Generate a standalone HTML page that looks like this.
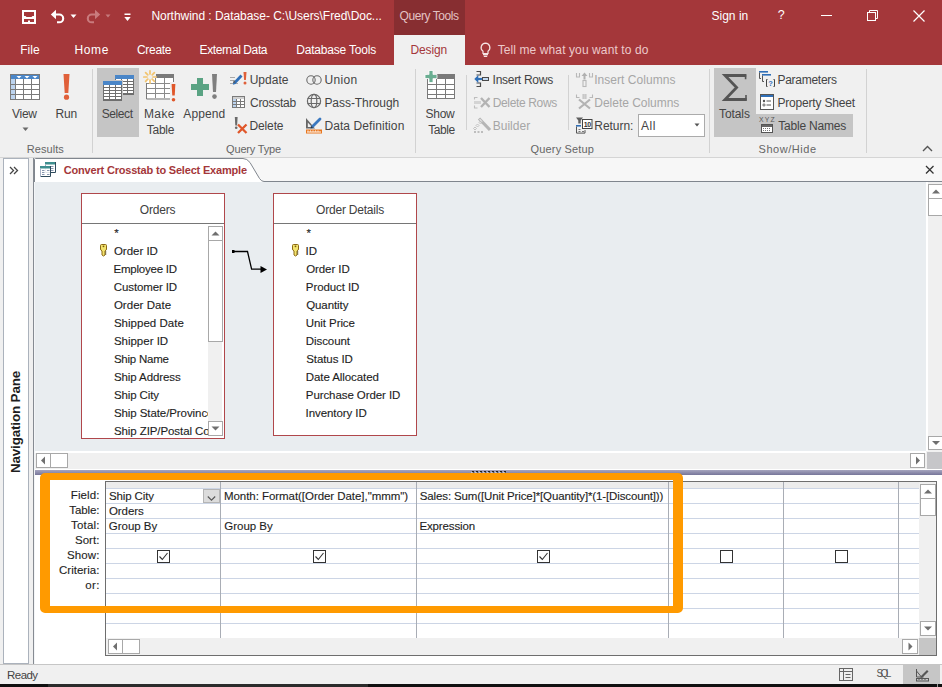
<!DOCTYPE html>
<html><head><meta charset="utf-8">
<style>
*{margin:0;padding:0;box-sizing:border-box}
html,body{width:942px;height:687px;overflow:hidden;background:#f0f0f0;font-family:"Liberation Sans",sans-serif;font-size:12px;color:#262626}
.a{position:absolute;white-space:nowrap}
svg.a{overflow:visible}
.k{-webkit-text-stroke:0.12px currentColor}
</style></head><body>
<div class="a" style="left:0px;top:0px;width:942px;height:65px;background:#a4373a;"></div>
<div class="a" style="left:394px;top:0px;width:71px;height:35px;background:#872e31;"></div>
<div class="a" style="left:394px;top:35px;width:71px;height:30px;background:#f0f0f0;"></div>
<svg class="a" style="left:22px;top:10px;" width="14" height="14" viewBox="0 0 14 14"><rect x="1" y="1" width="12" height="12" fill="none" stroke="#fff" stroke-width="2"/><path d="M2 6h1.5l1 1h5l1-1H12V9H2z" fill="#fff"/><rect x="6" y="10.5" width="2" height="2" fill="#fff"/></svg>
<svg class="a" style="left:50px;top:9px;" width="16" height="15" viewBox="0 0 16 15"><path d="M0.8 5.5L6 0.8V10.2z" fill="#fff"/><path d="M5 5.5H9.3A3.9 3.9 0 0 1 9.3 13.3H7" fill="none" stroke="#fff" stroke-width="2.1"/></svg>
<svg class="a" style="left:70px;top:14px;" width="8" height="5" viewBox="0 0 8 5"><path d="M0.5 0.5h6l-3 3.5z" fill="#fff"/></svg>
<svg class="a" style="left:85px;top:9px;" width="16" height="15" viewBox="0 0 16 15"><path d="M15.2 5.5L10 0.8V10.2z" fill="#c97b7d"/><path d="M11 5.5H6.7A3.9 3.9 0 0 0 6.7 13.3H9" fill="none" stroke="#c97b7d" stroke-width="2.1"/></svg>
<svg class="a" style="left:105px;top:14px;" width="7" height="5" viewBox="0 0 7 5"><path d="M0.5 0.5h5l-2.5 3z" fill="#c57a7c"/></svg>
<svg class="a" style="left:124px;top:13px;" width="8" height="9" viewBox="0 0 8 9"><rect x="0.5" y="0.5" width="6" height="1.5" fill="#fff"/><path d="M0.3 4h6.4l-3.2 4z" fill="#fff"/></svg>
<div class="a" style="left:151.40px;top:10px;font-size:12px;line-height:12px;color:#fff;letter-spacing:-0.041px;">Northwind : Database- C:\Users\Fred\Doc...</div>
<div class="a" style="left:399.60px;top:10px;font-size:12px;line-height:12px;color:#e3c2c3;letter-spacing:-0.440px;">Query Tools</div>
<div class="a" style="left:711.40px;top:10px;font-size:12px;line-height:12px;color:#fff;letter-spacing:0.033px;">Sign in</div>
<div class="a" style="left:777.80px;top:9px;font-size:12.5px;line-height:13px;color:#fff;">?</div>
<div class="a" style="left:821px;top:15px;width:11px;height:1px;background:#fff;"></div>
<svg class="a" style="left:866px;top:9px;" width="13" height="13" viewBox="0 0 13 13"><rect x="1.5" y="3.5" width="8" height="8" fill="none" stroke="#fff" stroke-width="1"/><path d="M3.5 3.5v-2h8v8h-2" fill="none" stroke="#fff" stroke-width="1"/></svg>
<svg class="a" style="left:912px;top:9px;" width="14" height="14" viewBox="0 0 14 14"><path d="M1.5 1.5L12.5 12.5M12.5 1.5L1.5 12.5" stroke="#fff" stroke-width="1.2"/></svg>
<div class="a" style="left:20.20px;top:44px;font-size:12px;line-height:12px;color:#fff;letter-spacing:0.067px;">File</div>
<div class="a" style="left:74.40px;top:44px;font-size:12px;line-height:12px;color:#fff;letter-spacing:0.667px;">Home</div>
<div class="a" style="left:137.00px;top:44px;font-size:12px;line-height:12px;color:#fff;letter-spacing:-0.320px;">Create</div>
<div class="a" style="left:199.60px;top:44px;font-size:12px;line-height:12px;color:#fff;letter-spacing:-0.400px;">External Data</div>
<div class="a" style="left:296.20px;top:44px;font-size:12px;line-height:12px;color:#fff;letter-spacing:-0.192px;">Database Tools</div>
<div class="a" style="left:410.60px;top:44px;font-size:12px;line-height:12px;color:#a4373a;letter-spacing:-0.160px;">Design</div>
<svg class="a" style="left:479px;top:42px;" width="13" height="16" viewBox="0 0 13 16"><path d="M6.5 1.2a4.4 4.4 0 0 0-2.5 8v2.3h5v-2.3a4.4 4.4 0 0 0-2.5-8z" fill="none" stroke="#f6e4e4" stroke-width="1.2"/><path d="M4 12.6h5M4.8 14.4h3.4" stroke="#f6e4e4" stroke-width="1.2"/></svg>
<div class="a" style="left:497.70px;top:44px;font-size:12px;line-height:12px;color:#ecc9ca;letter-spacing:0.100px;">Tell me what you want to do</div>
<div class="a" style="left:97px;top:68px;width:42px;height:69px;background:#c5c5c5;"></div>
<div class="a" style="left:714px;top:68px;width:42px;height:69px;background:#c5c5c5;"></div>
<div class="a" style="left:756px;top:114px;width:97px;height:23px;background:#c5c5c5;"></div>
<div class="a" style="left:92px;top:69px;width:1px;height:84px;background:#d2d2d2;"></div>
<div class="a" style="left:415px;top:69px;width:1px;height:84px;background:#d2d2d2;"></div>
<div class="a" style="left:709px;top:69px;width:1px;height:84px;background:#d2d2d2;"></div>
<div class="a" style="left:866px;top:69px;width:1px;height:84px;background:#d2d2d2;"></div>
<div class="a" style="left:466px;top:75px;width:1px;height:55px;background:#d2d2d2;"></div>
<div class="a" style="left:568px;top:75px;width:1px;height:55px;background:#d2d2d2;"></div>
<svg class="a" style="left:10px;top:74px;" width="31" height="26" viewBox="0 0 31 26"><rect x="0.5" y="0.5" width="29" height="25" fill="#fff" stroke="#7a7a7a" stroke-width="1"/><rect x="1" y="1" width="28" height="4" fill="#4a86c8"/><rect x="1" y="5" width="4" height="20" fill="#bcd3ee"/><rect x="5" y="5" width="1" height="20" fill="#7a7a7a"/><rect x="13" y="5" width="1" height="20" fill="#7a7a7a"/><rect x="21" y="5" width="1" height="20" fill="#7a7a7a"/><rect x="1" y="10" width="28" height="1" fill="#7a7a7a"/><rect x="1" y="15" width="28" height="1" fill="#7a7a7a"/><rect x="1" y="20" width="28" height="1" fill="#7a7a7a"/><path d="M6.5 2h5l-2.5 2.5z" fill="#fff"/><path d="M14.5 2h5l-2.5 2.5z" fill="#fff"/><path d="M22.5 2h5l-2.5 2.5z" fill="#fff"/></svg>
<svg class="a" style="left:22px;top:127px;" width="7" height="5" viewBox="0 0 7 5"><path d="M0.5 0.5h6l-3 3.5z" fill="#6a6a6a"/></svg>
<div class="a" style="left:12.10px;top:108px;font-size:12px;line-height:12px;color:#444444;letter-spacing:-0.300px;">View</div>
<svg class="a" style="left:62px;top:73px;" width="9" height="28" viewBox="0 0 9 28"><path d="M1.5 1h6l-1.2 19h-3.6z" fill="#e0603a"/><circle cx="4.5" cy="24.2" r="2.6" fill="#e0603a"/></svg>
<div class="a" style="left:55.60px;top:108px;font-size:12px;line-height:12px;color:#444444;letter-spacing:-0.200px;">Run</div>
<svg class="a" style="left:103px;top:75px;" width="31" height="26" viewBox="0 0 31 26"><rect x="12" y="0" width="19" height="20" fill="#6e6e6e"/><rect x="12" y="0" width="19" height="4" fill="#4a86c8"/><rect x="13.00" y="4.00" width="5.00" height="2.00" fill="#fff"/><rect x="19.00" y="4.00" width="5.00" height="2.00" fill="#fff"/><rect x="25.00" y="4.00" width="5.00" height="2.00" fill="#fff"/><rect x="13.00" y="7.00" width="5.00" height="2.00" fill="#fff"/><rect x="19.00" y="7.00" width="5.00" height="2.00" fill="#fff"/><rect x="25.00" y="7.00" width="5.00" height="2.00" fill="#fff"/><rect x="13.00" y="10.00" width="5.00" height="2.00" fill="#fff"/><rect x="19.00" y="10.00" width="5.00" height="2.00" fill="#fff"/><rect x="25.00" y="10.00" width="5.00" height="2.00" fill="#fff"/><rect x="13.00" y="13.00" width="5.00" height="2.00" fill="#fff"/><rect x="19.00" y="13.00" width="5.00" height="2.00" fill="#fff"/><rect x="25.00" y="13.00" width="5.00" height="2.00" fill="#fff"/><rect x="13.00" y="16.00" width="5.00" height="2.00" fill="#fff"/><rect x="19.00" y="16.00" width="5.00" height="2.00" fill="#fff"/><rect x="25.00" y="16.00" width="5.00" height="2.00" fill="#fff"/><rect x="11" y="5" width="9" height="21" fill="#c5c5c5"/><rect x="0" y="6" width="19" height="20" fill="#6e6e6e"/><rect x="0" y="6" width="19" height="4" fill="#4a86c8"/><rect x="1.00" y="10.00" width="5.00" height="2.00" fill="#fff"/><rect x="7.00" y="10.00" width="5.00" height="2.00" fill="#fff"/><rect x="13.00" y="10.00" width="5.00" height="2.00" fill="#fff"/><rect x="1.00" y="13.00" width="5.00" height="2.00" fill="#fff"/><rect x="7.00" y="13.00" width="5.00" height="2.00" fill="#fff"/><rect x="13.00" y="13.00" width="5.00" height="2.00" fill="#fff"/><rect x="1.00" y="16.00" width="5.00" height="2.00" fill="#fff"/><rect x="7.00" y="16.00" width="5.00" height="2.00" fill="#fff"/><rect x="13.00" y="16.00" width="5.00" height="2.00" fill="#fff"/><rect x="1.00" y="19.00" width="5.00" height="2.00" fill="#fff"/><rect x="7.00" y="19.00" width="5.00" height="2.00" fill="#fff"/><rect x="13.00" y="19.00" width="5.00" height="2.00" fill="#fff"/><rect x="1.00" y="22.00" width="5.00" height="2.00" fill="#fff"/><rect x="7.00" y="22.00" width="5.00" height="2.00" fill="#fff"/><rect x="13.00" y="22.00" width="5.00" height="2.00" fill="#fff"/></svg>
<div class="a" style="left:101.70px;top:108px;font-size:12px;line-height:12px;color:#444444;letter-spacing:-0.400px;">Select</div>
<svg class="a" style="left:144px;top:70px;" width="33" height="33" viewBox="0 0 33 33"><rect x="3" y="8" width="26" height="20" fill="#fff"/><rect x="12" y="4" width="18" height="4" fill="#7a7a7a"/><path d="M2.5 13v16h25M29.5 4v9" fill="none" stroke="#7a7a7a"/><path d="M3 13.5h24M3 18.5h24M3 23.5h24M11.5 8v20M20.5 8v20" stroke="#8a8a8a"/><rect x="26" y="12" width="7" height="21" fill="#f0f0f0"/><path d="M27.6 14h3.8l-0.7 11.5h-2.4z" fill="#e0572a"/><circle cx="29.5" cy="29.8" r="1.8" fill="#e0572a"/><circle cx="6" cy="7" r="3.6" fill="#f0f0f0"/><g stroke="#f2c46e" stroke-width="1.7" stroke-linecap="round"><path d="M6 0.8v3.2M6 10v3.2M-0.2 7h3.2M9 7h3.2M1.6 2.6l2.2 2.2M8.2 9.2l2.2 2.2M10.4 2.6l-2.2 2.2M3.8 9.2l-2.2 2.2"/></g></svg>
<div class="a" style="left:144.00px;top:108px;font-size:12px;line-height:12px;color:#444444;letter-spacing:0.367px;">Make</div>
<div class="a" style="left:146.70px;top:124px;font-size:12px;line-height:12px;color:#444444;letter-spacing:-0.225px;">Table</div>
<svg class="a" style="left:191px;top:78px;overflow:visible" width="27" height="22" viewBox="0 0 27 22"><path d="M6 0h6v6h6v6h-6v6h-6v-6h-6v-6h6z" fill="#5aa383"/><path d="M21 -4h5l-1 18h-3z" fill="#7f7f7f"/><circle cx="23.5" cy="18.6" r="2.3" fill="#7f7f7f"/></svg>
<div class="a" style="left:183.30px;top:108px;font-size:12px;line-height:12px;color:#444444;letter-spacing:0.120px;">Append</div>
<svg class="a" style="left:230px;top:72px;" width="17" height="14" viewBox="0 0 17 14"><g stroke="#a8a8a8" stroke-width="1"><path d="M0 5.5h5M0 8.5h5M0 11.5h8"/></g><path d="M3.5 10l7-7.5 2 2-7 7.5-2.6 0.8z" fill="#2f6fb8"/><path d="M3 11l0.8-2.5 1.8 1.8z" fill="#555"/><path d="M13.5 0h3l-0.6 8h-1.8z" fill="#e0603a"/><circle cx="15" cy="11" r="1.5" fill="#e0603a"/></svg>
<div class="a" style="left:249.70px;top:74px;font-size:12px;line-height:12px;color:#444444;letter-spacing:0.020px;">Update</div>
<svg class="a" style="left:232px;top:96px;" width="13" height="12" viewBox="0 0 13 12"><rect x="0.5" y="0.5" width="12" height="11" fill="#fff" stroke="#7a7a7a" stroke-width="1"/><rect x="1" y="1" width="11" height="2" fill="#d0d0d0"/><rect x="1" y="3" width="3" height="8" fill="#bcd3ee"/><rect x="4" y="3" width="1" height="8" fill="#7a7a7a"/><rect x="8" y="3" width="1" height="8" fill="#7a7a7a"/><rect x="1" y="5" width="11" height="1" fill="#7a7a7a"/><rect x="1" y="8" width="11" height="1" fill="#7a7a7a"/></svg>
<div class="a" style="left:250.00px;top:97px;font-size:12px;line-height:12px;color:#444444;letter-spacing:-0.271px;">Crosstab</div>
<svg class="a" style="left:234px;top:117px;" width="14" height="17" viewBox="0 0 14 17"><path d="M0.8 0h2.8l-0.5 8.5h-1.8z" fill="#6a6a6a"/><circle cx="2.2" cy="10.8" r="1.3" fill="#6a6a6a"/><path d="M4 7.5l8.5 8.5M12.5 7.5l-8.5 8.5" stroke="#e0572a" stroke-width="2.3"/></svg>
<div class="a" style="left:249.60px;top:120px;font-size:12px;line-height:12px;color:#444444;letter-spacing:-0.160px;">Delete</div>
<svg class="a" style="left:306px;top:75px;" width="16" height="10" viewBox="0 0 16 10"><circle cx="5" cy="5" r="4.2" fill="none" stroke="#6a6a6a" stroke-width="1.1"/><circle cx="11" cy="5" r="4.2" fill="none" stroke="#6a6a6a" stroke-width="1.1"/></svg>
<div class="a" style="left:324.50px;top:74px;font-size:12px;line-height:12px;color:#444444;letter-spacing:0.350px;">Union</div>
<svg class="a" style="left:306px;top:93px;" width="16" height="16" viewBox="0 0 16 16"><g fill="none" stroke="#6a6a6a" stroke-width="1.2"><circle cx="8" cy="8" r="6.6"/><ellipse cx="8" cy="8" rx="2.8" ry="6.6"/><path d="M1.5 5.5h13M1.5 10.5h13"/></g></svg>
<div class="a" style="left:324.40px;top:97px;font-size:12px;line-height:12px;color:#444444;letter-spacing:-0.045px;">Pass-Through</div>
<svg class="a" style="left:305px;top:117px;" width="18" height="17" viewBox="0 0 18 17"><path d="M1 1V11.5H10z" fill="#666"/><path d="M2.8 5.5V10H7z" fill="#f0f0f0"/><path d="M7 10L15 2" stroke="#3a78c0" stroke-width="2.8" stroke-linecap="round"/><path d="M5.5 11.5l1-2.5 1.5 1.5z" fill="#333"/><rect x="1" y="12.5" width="16" height="4" fill="#e8771f"/><g fill="#fff"><rect x="2.5" y="13.5" width="1" height="1"/><rect x="5" y="13.5" width="1" height="1"/><rect x="7.5" y="13.5" width="1" height="1"/><rect x="10" y="13.5" width="1" height="1"/><rect x="12.5" y="13.5" width="1" height="1"/><rect x="2" y="14.5" width="14" height="1"/></g></svg>
<div class="a" style="left:324.40px;top:120px;font-size:12px;line-height:12px;color:#444444;letter-spacing:0.086px;">Data Definition</div>
<div class="a" style="left:26.70px;top:144px;font-size:11px;line-height:11px;color:#666666;letter-spacing:0.083px;">Results</div>
<div class="a" style="left:226.10px;top:144px;font-size:11px;line-height:11px;color:#666666;letter-spacing:-0.189px;">Query Type</div>
<svg class="a" style="left:425px;top:71px;" width="30" height="28" viewBox="0 0 30 28"><rect x="2.5" y="3.5" width="27" height="24" fill="#fff" stroke="#7a7a7a" stroke-width="1"/><rect x="3" y="4" width="26" height="4" fill="#7a7a7a"/><rect x="11" y="8" width="1" height="19" fill="#7a7a7a"/><rect x="20" y="8" width="1" height="19" fill="#7a7a7a"/><rect x="3" y="13" width="26" height="1" fill="#7a7a7a"/><rect x="3" y="18" width="26" height="1" fill="#7a7a7a"/><rect x="3" y="23" width="26" height="1" fill="#7a7a7a"/><path d="M4 -0.5h4v4h4v4h-4v4h-4v-4h-4v-4h4z" fill="#6aae92" stroke="#fff" stroke-width="0.8"/></svg>
<div class="a" style="left:425.50px;top:108px;font-size:12px;line-height:12px;color:#444444;letter-spacing:-0.267px;">Show</div>
<div class="a" style="left:428.20px;top:124px;font-size:12px;line-height:12px;color:#444444;letter-spacing:-0.400px;">Table</div>
<svg class="a" style="left:474px;top:70px;" width="16" height="19" viewBox="0 0 16 19"><path d="M2.5 1.5h4v3.5h-4M2.5 13h4v3.5h-4" fill="none" stroke="#4a4a4a" stroke-width="1.2"/><path d="M3 9h5" stroke="#2f6fb8" stroke-width="2.2"/><path d="M0.3 9l4-4v8z" fill="#2f6fb8"/><rect x="8.5" y="7.5" width="6" height="3" fill="#c4daf2" stroke="#4a4a4a" stroke-width="1"/></svg>
<div class="a" style="left:492.60px;top:74px;font-size:12px;line-height:12px;color:#444444;letter-spacing:-0.280px;">Insert Rows</div>
<svg class="a" style="left:473px;top:95px;" width="18" height="15" viewBox="0 0 18 15"><path d="M4.5 2.5h-3v2M1.5 10.5v2.5h3" fill="none" stroke="#bdbdbd" stroke-width="1.1"/><rect x="1" y="6" width="7" height="3" fill="#d4d4d4"/><path d="M8 3l8.5 9M16.5 3l-8.5 9" stroke="#b3b3b3" stroke-width="2.4"/></svg>
<div class="a" style="left:492.70px;top:97px;font-size:12px;line-height:12px;color:#a6a6a6;letter-spacing:-0.350px;">Delete Rows</div>
<svg class="a" style="left:473px;top:117px;" width="18" height="17" viewBox="0 0 18 17"><path d="M6 1.5l11 11.5" stroke="#b5b5b5" stroke-width="3.2"/><path d="M6.6 2.2l2.5 2.6" stroke="#e6e6e6" stroke-width="1.2"/><g fill="none" stroke="#bdbdbd" stroke-width="0.9"><path d="M3 8.5l1.5-1.5 1.5 1.5-1.5 1.5z"/><path d="M6 5.5l1.5-1.5 1.5 1.5-1.5 1.5z"/><path d="M0.5 11.5l1.5-1.5 1.5 1.5-1.5 1.5z"/></g><g fill="#bdbdbd"><rect x="1" y="14" width="2" height="2"/><rect x="4.5" y="14" width="2" height="2"/><rect x="8" y="14" width="2" height="2"/></g></svg>
<div class="a" style="left:492.70px;top:120px;font-size:12px;line-height:12px;color:#a6a6a6;letter-spacing:0.017px;">Builder</div>
<svg class="a" style="left:576px;top:72px;" width="17" height="16" viewBox="0 0 17 16"><path d="M0.5 1v4h3v-4M13.5 1v4h3v-4" fill="none" stroke="#b8b8b8" stroke-width="1.1"/><path d="M8.5 2.5v5" stroke="#b0b0b0" stroke-width="2"/><path d="M5.5 4l3-3.5 3 3.5z" fill="#b0b0b0"/><rect x="7" y="8.5" width="3" height="6" fill="none" stroke="#b8b8b8" stroke-width="1.1"/></svg>
<div class="a" style="left:594.20px;top:74px;font-size:12px;line-height:12px;color:#a6a6a6;letter-spacing:0.038px;">Insert Columns</div>
<svg class="a" style="left:576px;top:94px;" width="17" height="16" viewBox="0 0 17 16"><path d="M0.5 0.5v3h3M13.5 3.5h3v-3" fill="none" stroke="#b8b8b8" stroke-width="1.1"/><rect x="7" y="0" width="3" height="5" fill="#d0d0d0"/><path d="M7 0v5M10 0v5" stroke="#c0c0c0"/><path d="M3 5.5l11 9M14 5.5l-11 9" stroke="#b3b3b3" stroke-width="2.2"/></svg>
<div class="a" style="left:594.30px;top:97px;font-size:12px;line-height:12px;color:#a6a6a6;letter-spacing:-0.023px;">Delete Columns</div>
<svg class="a" style="left:576px;top:117px;" width="17" height="17" viewBox="0 0 17 17"><path d="M0 0.5h7l-2.3 3v3h-2.4v-3z" fill="#606060"/><rect x="0" y="8" width="5" height="1.6" fill="#2f6fb8"/><path d="M0.5 9.6v6.5h8.5v-3" fill="none" stroke="#555" stroke-width="1"/><path d="M2.5 12.5h2M2.5 14.5h2M6 14.5h2" stroke="#777"/><rect x="6.5" y="2.5" width="9.5" height="9" fill="#fff" stroke="#444" stroke-width="1"/><text x="11.3" y="10" font-family="Liberation Sans" font-size="7" font-weight="bold" text-anchor="middle" fill="#333" letter-spacing="-0.3">10</text></svg>
<div class="a" style="left:594.30px;top:120px;font-size:12px;line-height:12px;color:#444444;letter-spacing:-0.050px;">Return:</div>
<div class="a" style="left:638px;top:114px;width:67px;height:23px;background:#fff;border:1px solid #ababab;"></div>
<div class="a" style="left:641.00px;top:120px;font-size:12px;line-height:12px;color:#444444;letter-spacing:0.600px;">All</div>
<svg class="a" style="left:694px;top:123px;" width="7" height="5" viewBox="0 0 7 5"><path d="M0.5 0.5h5l-2.5 3z" fill="#555"/></svg>
<div class="a" style="left:530.50px;top:144px;font-size:11px;line-height:11px;color:#666666;letter-spacing:0.170px;">Query Setup</div>
<svg class="a" style="left:722px;top:73px;" width="27" height="29" viewBox="0 0 27 29"><path d="M24.2 2.5H3L14.6 14.5L3 26.5H24.6" fill="none" stroke="#555" stroke-width="2.8" stroke-linejoin="miter"/><path d="M23.6 1.2v5M24 22v5.8" stroke="#555" stroke-width="1.6"/></svg>
<div class="a" style="left:719.00px;top:108px;font-size:12px;line-height:12px;color:#444444;letter-spacing:-0.080px;">Totals</div>
<svg class="a" style="left:758px;top:70px;" width="18" height="18" viewBox="0 0 18 18"><rect x="1" y="1" width="9" height="1.6" fill="#2f6fb8"/><path d="M1.5 2.5V8.5H3" fill="none" stroke="#555"/><rect x="4" y="4" width="9" height="1.6" fill="#2f6fb8"/><path d="M4.5 5.5V11.5H6" fill="none" stroke="#555"/><path d="M9.5 9.5H8.5V16.5H9.5M15.5 9.5H16.5V16.5H15.5" fill="none" stroke="#444"/><text x="12.5" y="15.5" font-family="Liberation Sans" font-weight="bold" font-size="7.5" text-anchor="middle" fill="#2f6fb8">?</text></svg>
<div class="a" style="left:777.50px;top:74px;font-size:12px;line-height:12px;color:#444444;letter-spacing:-0.278px;">Parameters</div>
<svg class="a" style="left:760px;top:94px;" width="14" height="16" viewBox="0 0 14 16"><rect x="0.5" y="0.5" width="13" height="15" fill="#fff" stroke="#555"/><rect x="1" y="1" width="12" height="2" fill="#2f6fb8"/><circle cx="4" cy="7" r="1.2" fill="#555"/><circle cx="4" cy="11" r="1.1" fill="none" stroke="#555" stroke-width="0.9"/><path d="M6.5 7h4.5M6.5 11h4.5" stroke="#555" stroke-width="1"/></svg>
<div class="a" style="left:777.50px;top:97px;font-size:12px;line-height:12px;color:#444444;letter-spacing:-0.192px;">Property Sheet</div>
<svg class="a" style="left:759px;top:116px;" width="17" height="17" viewBox="0 0 17 17"><text x="8.5" y="5.8" font-family="Liberation Sans" font-size="6.8" letter-spacing="1.2" text-anchor="middle" fill="#555">XYZ</text><rect x="2.5" y="8.5" width="11" height="8" fill="#fff" stroke="#555"/><rect x="3" y="9" width="10" height="2" fill="#666"/><g fill="#777"><rect x="4" y="12" width="1" height="1"/><rect x="6" y="12" width="1" height="1"/><rect x="8" y="12" width="1" height="1"/><rect x="10" y="12" width="1" height="1"/><rect x="4" y="14" width="1" height="1"/><rect x="6" y="14" width="1" height="1"/><rect x="8" y="14" width="1" height="1"/><rect x="10" y="14" width="1" height="1"/></g></svg>
<div class="a" style="left:778.20px;top:120px;font-size:12px;line-height:12px;color:#444444;letter-spacing:-0.200px;">Table Names</div>
<div class="a" style="left:758.50px;top:144px;font-size:11px;line-height:11px;color:#666666;letter-spacing:0.550px;">Show/Hide</div>
<svg class="a" style="left:922px;top:145px;" width="11" height="7" viewBox="0 0 11 7"><path d="M1 6l4.5-4.5L10 6" fill="none" stroke="#555" stroke-width="1.4"/></svg>
<div class="a" style="left:0px;top:157px;width:942px;height:1px;background:#d5d5d5;"></div>
<div class="a" style="left:3px;top:158px;width:26px;height:506px;background:#fff;border:1px solid #abb2bc;"></div>
<svg class="a" style="left:9px;top:166px;" width="10" height="9" viewBox="0 0 10 9"><path d="M1 1l3.5 3.5L1 8M5 1l3.5 3.5L5 8" fill="none" stroke="#444" stroke-width="1.3"/></svg>
<div class="a" style="left:15.5px;top:422.3px;width:0;height:0;"><div style="position:absolute;left:0;top:0;transform:translate(-50%,-50%) rotate(-90deg);font-size:13.5px;line-height:14px;font-weight:bold;color:#1e1e1e;letter-spacing:-0.19px;white-space:nowrap">Navigation Pane</div></div>
<div class="a" style="left:33px;top:158px;width:1px;height:507px;background:#868b92;"></div>
<div class="a" style="left:34px;top:182px;width:1px;height:482px;background:#f3f5f7;"></div>
<div class="a" style="left:35px;top:158px;width:907px;height:23px;background:#f7f7f7;"></div>
<svg class="a" style="left:34px;top:158px;" width="908" height="24" viewBox="0 0 908 24"><path d="M0.5 24V1.5Q0.5 0.5 1.5 0.5H209Q213 0.5 216 4.5L225.5 20.5Q227.5 23.5 230 23.5V24z" fill="#fff"/><path d="M0.5 24V1.5Q0.5 0.5 1.5 0.5H209Q213 0.5 216 4.5L225.5 20.5Q227.5 23.5 230 23.5H908" fill="none" stroke="#80868e" stroke-width="1"/></svg>
<svg class="a" style="left:40px;top:162px;" width="16" height="15" viewBox="0 0 16 15"><rect x="5.5" y="0.5" width="10" height="10" fill="#fff"/><rect x="5" y="0" width="11" height="2.5" fill="#3f8f8f"/><path d="M15.5 0v10.5H5.5" fill="none" stroke="#2f4a5c"/><path d="M5.5 2.5V10.5" stroke="#9aa6bc"/><path d="M11 4.5h2.5M11 6.5h2.5M11 8.5h2.5" stroke="#8a98b0" stroke-width="1"/><rect x="0.5" y="4.5" width="10" height="10" fill="#fff" fill-opacity="0.85"/><rect x="0" y="4" width="11" height="2.5" fill="#3f8f8f"/><path d="M10.5 4v10.5H0.5" fill="none" stroke="#2f4a5c"/><path d="M0.5 6.5V14.5" stroke="#a8b2c6"/><path d="M2 8.5h2.5M7 8.5h2.5M2 10.5h2.5M2 12.5h2.5M7 12.5h2.5" stroke="#8a98b0" stroke-width="1"/></svg>
<div class="a" style="left:63.80px;top:165px;font-size:11px;line-height:11px;color:#a4373a;letter-spacing:-0.191px;font-weight:bold;">Convert Crosstab to Select Example</div>
<svg class="a" style="left:925px;top:165px;" width="10" height="10" viewBox="0 0 10 10"><path d="M1 1l7.5 7.5M8.5 1l-7.5 7.5" stroke="#333" stroke-width="1.25"/></svg>
<div class="a" style="left:35px;top:182px;width:891px;height:269px;background:#e9edf0;"></div>
<div class="a" style="left:926px;top:182px;width:2px;height:269px;background:#fff;"></div>
<div class="a" style="left:928px;top:182px;width:14px;height:269px;background:#f0f0f0;"></div>
<div class="a" style="left:928px;top:184px;width:16px;height:15px;background:#fff;border:1px solid #a8a8a8;"></div>
<svg class="a" style="left:0;top:0" width="942" height="687"><path d="M932.0 193.5h8l-4-4z" fill="#6f6f6f"/></svg>
<div class="a" style="left:928px;top:198px;width:16px;height:18px;background:#fff;border:1px solid #a8a8a8;"></div>
<div class="a" style="left:928px;top:436px;width:16px;height:14px;background:#fff;border:1px solid #a8a8a8;"></div>
<svg class="a" style="left:0;top:0" width="942" height="687"><path d="M932.0 441.0h8l-4 4z" fill="#6f6f6f"/></svg>
<div class="a" style="left:35px;top:451px;width:891px;height:2px;background:#fff;"></div>
<div class="a" style="left:35px;top:453px;width:891px;height:16px;background:#f0f0f0;"></div>
<div class="a" style="left:36px;top:453px;width:15px;height:15px;background:#fff;border:1px solid #a8a8a8;"></div>
<svg class="a" style="left:0;top:0" width="942" height="687"><path d="M45.0 456.5v8l-4-4z" fill="#6f6f6f"/></svg>
<div class="a" style="left:50px;top:453px;width:18px;height:15px;background:#fff;border:1px solid #a8a8a8;"></div>
<div class="a" style="left:910px;top:453px;width:15px;height:15px;background:#fff;border:1px solid #a8a8a8;"></div>
<svg class="a" style="left:0;top:0" width="942" height="687"><path d="M916.0 456.5v8l4-4z" fill="#6f6f6f"/></svg>
<div class="a" style="left:927px;top:452px;width:15px;height:17px;background:#c6c6c9;"></div>
<div class="a" style="left:35px;top:469px;width:907px;height:1px;background:#fff;"></div>
<div class="a" style="left:35px;top:470px;width:907px;height:5px;background:linear-gradient(#a6a5bf,#77769a);"></div>
<svg class="a" style="left:471px;top:471px;" width="37" height="3" viewBox="0 0 37 3"><rect x="1" y="0" width="2" height="1.5" fill="#222"/><rect x="0" y="1.5" width="2" height="1" fill="#fff"/><rect x="5" y="0" width="2" height="1.5" fill="#222"/><rect x="4" y="1.5" width="2" height="1" fill="#fff"/><rect x="9" y="0" width="2" height="1.5" fill="#222"/><rect x="8" y="1.5" width="2" height="1" fill="#fff"/><rect x="13" y="0" width="2" height="1.5" fill="#222"/><rect x="12" y="1.5" width="2" height="1" fill="#fff"/><rect x="17" y="0" width="2" height="1.5" fill="#222"/><rect x="16" y="1.5" width="2" height="1" fill="#fff"/><rect x="21" y="0" width="2" height="1.5" fill="#222"/><rect x="20" y="1.5" width="2" height="1" fill="#fff"/><rect x="25" y="0" width="2" height="1.5" fill="#222"/><rect x="24" y="1.5" width="2" height="1" fill="#fff"/><rect x="29" y="0" width="2" height="1.5" fill="#222"/><rect x="28" y="1.5" width="2" height="1" fill="#fff"/><rect x="33" y="0" width="2" height="1.5" fill="#222"/><rect x="32" y="1.5" width="2" height="1" fill="#fff"/></svg>
<div class="a" style="left:81px;top:193px;width:144px;height:246px;background:#fff;border:1px solid #b0474b;"></div>
<div class="a" style="left:82px;top:223px;width:142px;height:1px;background:#767676;"></div>
<div class="a" style="left:139.80px;top:204px;font-size:12px;line-height:12px;color:#404040;letter-spacing:-0.180px;">Orders</div>
<div class="a" style="left:82px;top:224px;width:126px;height:214px;overflow:hidden">
<div class="a k" style="left:32.20px;top:3px;font-size:11.5px;line-height:12px;color:#1e1e1e;letter-spacing:-0.08px;">*</div>
<div class="a k" style="left:31.90px;top:21px;font-size:11.5px;line-height:12px;color:#1e1e1e;letter-spacing:-0.014px;">Order ID</div>
<div class="a k" style="left:31.50px;top:39px;font-size:11.5px;line-height:12px;color:#1e1e1e;letter-spacing:-0.220px;">Employee ID</div>
<div class="a k" style="left:31.80px;top:57px;font-size:11.5px;line-height:12px;color:#1e1e1e;letter-spacing:-0.120px;">Customer ID</div>
<div class="a k" style="left:31.90px;top:75px;font-size:11.5px;line-height:12px;color:#1e1e1e;letter-spacing:0.033px;">Order Date</div>
<div class="a k" style="left:31.90px;top:93px;font-size:11.5px;line-height:12px;color:#1e1e1e;letter-spacing:0.027px;">Shipped Date</div>
<div class="a k" style="left:31.90px;top:111px;font-size:11.5px;line-height:12px;color:#1e1e1e;letter-spacing:-0.011px;">Shipper ID</div>
<div class="a k" style="left:31.90px;top:129px;font-size:11.5px;line-height:12px;color:#1e1e1e;letter-spacing:-0.237px;">Ship Name</div>
<div class="a k" style="left:31.90px;top:147px;font-size:11.5px;line-height:12px;color:#1e1e1e;letter-spacing:-0.082px;">Ship Address</div>
<div class="a k" style="left:31.90px;top:165px;font-size:11.5px;line-height:12px;color:#1e1e1e;letter-spacing:-0.100px;">Ship City</div>
<div class="a k" style="left:31.90px;top:183px;font-size:11.5px;line-height:12px;color:#1e1e1e;letter-spacing:-0.08px;">Ship State/Province</div>
<div class="a k" style="left:31.90px;top:201px;font-size:11.5px;line-height:12px;color:#1e1e1e;letter-spacing:-0.08px;">Ship ZIP/Postal Code</div>
</div>
<svg class="a" style="left:100px;top:244px;" width="8" height="12" viewBox="0 0 8 12"><path d="M1.5 0.5h4a1 1 0 0 1 1 1v3.5q0 1.2-1.5 2v4l-1.5 1-1.5-1v-4q-1.5-.8-1.5-2v-3.5a1 1 0 0 1 1-1z" fill="#f2e36e" stroke="#8b6914" stroke-width="1"/><circle cx="3.5" cy="2.3" r="0.9" fill="#7a5a10"/><path d="M5 8h1.3M5 10h1.3" stroke="#4a3a08" stroke-width="1"/></svg>
<div class="a" style="left:208px;top:226px;width:14px;height:210px;background:#f0f0f0;"></div>
<div class="a" style="left:208px;top:226px;width:15px;height:15px;background:#fff;border:1px solid #a8a8a8;"></div>
<svg class="a" style="left:0;top:0" width="942" height="687"><path d="M211.5 235.5h8l-4-4z" fill="#6f6f6f"/></svg>
<div class="a" style="left:208px;top:240px;width:15px;height:102px;background:#fff;border:1px solid #a8a8a8;"></div>
<div class="a" style="left:208px;top:421px;width:15px;height:15px;background:#fff;border:1px solid #a8a8a8;"></div>
<svg class="a" style="left:0;top:0" width="942" height="687"><path d="M211.5 426.5h8l-4 4z" fill="#6f6f6f"/></svg>
<div class="a" style="left:273px;top:193px;width:144px;height:243px;background:#fff;border:1px solid #b0474b;"></div>
<div class="a" style="left:274px;top:223px;width:142px;height:1px;background:#767676;"></div>
<div class="a" style="left:316.10px;top:204px;font-size:12px;line-height:12px;color:#404040;letter-spacing:-0.217px;">Order Details</div>
<div class="a" style="left:274px;top:224px;width:142px;height:211px;overflow:hidden">
<div class="a k" style="left:32.50px;top:3px;font-size:11.5px;line-height:12px;color:#1e1e1e;letter-spacing:-0.08px;">*</div>
<div class="a k" style="left:31.60px;top:21px;font-size:11.5px;line-height:12px;color:#1e1e1e;letter-spacing:-0.08px;">ID</div>
<div class="a k" style="left:32.20px;top:39px;font-size:11.5px;line-height:12px;color:#1e1e1e;letter-spacing:-0.08px;">Order ID</div>
<div class="a k" style="left:31.80px;top:57px;font-size:11.5px;line-height:12px;color:#1e1e1e;letter-spacing:-0.08px;">Product ID</div>
<div class="a k" style="left:32.20px;top:75px;font-size:11.5px;line-height:12px;color:#1e1e1e;letter-spacing:-0.08px;">Quantity</div>
<div class="a k" style="left:31.80px;top:93px;font-size:11.5px;line-height:12px;color:#1e1e1e;letter-spacing:-0.08px;">Unit Price</div>
<div class="a k" style="left:31.80px;top:111px;font-size:11.5px;line-height:12px;color:#1e1e1e;letter-spacing:-0.08px;">Discount</div>
<div class="a k" style="left:32.20px;top:129px;font-size:11.5px;line-height:12px;color:#1e1e1e;letter-spacing:-0.08px;">Status ID</div>
<div class="a k" style="left:31.80px;top:147px;font-size:11.5px;line-height:12px;color:#1e1e1e;letter-spacing:-0.08px;">Date Allocated</div>
<div class="a k" style="left:31.80px;top:165px;font-size:11.5px;line-height:12px;color:#1e1e1e;letter-spacing:-0.08px;">Purchase Order ID</div>
<div class="a k" style="left:31.60px;top:183px;font-size:11.5px;line-height:12px;color:#1e1e1e;letter-spacing:-0.08px;">Inventory ID</div>
</div>
<svg class="a" style="left:292px;top:244px;" width="8" height="12" viewBox="0 0 8 12"><path d="M1.5 0.5h4a1 1 0 0 1 1 1v3.5q0 1.2-1.5 2v4l-1.5 1-1.5-1v-4q-1.5-.8-1.5-2v-3.5a1 1 0 0 1 1-1z" fill="#f2e36e" stroke="#8b6914" stroke-width="1"/><circle cx="3.5" cy="2.3" r="0.9" fill="#7a5a10"/><path d="M5 8h1.3M5 10h1.3" stroke="#4a3a08" stroke-width="1"/></svg>
<svg class="a" style="left:230px;top:248px;" width="40" height="28" viewBox="0 0 40 28"><rect x="2" y="2" width="2.5" height="3" fill="#000"/><path d="M3 3.5H17.5L21.6 21.2H31" fill="none" stroke="#000" stroke-width="1.3"/><path d="M30.5 18L37 21.5L30.5 25z" fill="#000"/></svg>
<div class="a" style="left:35px;top:475px;width:907px;height:189px;background:#fff;"></div>
<div class="a" style="left:105px;top:481px;width:832px;height:175px;background:#fff;border:1px solid #6e6e6e;"></div>
<div class="a" style="left:106px;top:482px;width:813px;height:6px;background:#ececec;"></div>
<div class="a" style="left:106px;top:488px;width:813px;height:1px;background:#ccd5e5;"></div>
<div class="a" style="left:106px;top:503px;width:813px;height:1px;background:#ccd5e5;"></div>
<div class="a" style="left:106px;top:518px;width:813px;height:1px;background:#ccd5e5;"></div>
<div class="a" style="left:106px;top:533px;width:813px;height:1px;background:#ccd5e5;"></div>
<div class="a" style="left:106px;top:548px;width:813px;height:1px;background:#ccd5e5;"></div>
<div class="a" style="left:106px;top:563px;width:813px;height:1px;background:#ccd5e5;"></div>
<div class="a" style="left:106px;top:578px;width:813px;height:1px;background:#ccd5e5;"></div>
<div class="a" style="left:106px;top:593px;width:813px;height:1px;background:#ccd5e5;"></div>
<div class="a" style="left:106px;top:608px;width:813px;height:1px;background:#ccd5e5;"></div>
<div class="a" style="left:106px;top:623px;width:813px;height:1px;background:#ccd5e5;"></div>
<div class="a" style="left:220px;top:482px;width:1px;height:156px;background:#a9adb5;"></div>
<div class="a" style="left:416px;top:482px;width:1px;height:156px;background:#a9adb5;"></div>
<div class="a" style="left:668px;top:482px;width:1px;height:156px;background:#a9adb5;"></div>
<div class="a" style="left:783px;top:482px;width:1px;height:156px;background:#a9adb5;"></div>
<div class="a" style="left:898px;top:482px;width:1px;height:156px;background:#a9adb5;"></div>
<div class="a" style="left:919px;top:482px;width:17px;height:156px;background:#f0f0f0;"></div>
<div class="a" style="left:920px;top:484px;width:16px;height:15px;background:#fff;border:1px solid #a8a8a8;"></div>
<svg class="a" style="left:0;top:0" width="942" height="687"><path d="M924.0 493.5h8l-4-4z" fill="#6f6f6f"/></svg>
<div class="a" style="left:920px;top:498px;width:16px;height:18px;background:#fff;border:1px solid #a8a8a8;"></div>
<div class="a" style="left:920px;top:621px;width:16px;height:15px;background:#fff;border:1px solid #a8a8a8;"></div>
<svg class="a" style="left:0;top:0" width="942" height="687"><path d="M924.0 626.5h8l-4 4z" fill="#6f6f6f"/></svg>
<div class="a" style="left:106px;top:638px;width:813px;height:17px;background:#f0f0f0;"></div>
<div class="a" style="left:108px;top:639px;width:15px;height:15px;background:#fff;border:1px solid #a8a8a8;"></div>
<svg class="a" style="left:0;top:0" width="942" height="687"><path d="M117.0 642.5v8l-4-4z" fill="#6f6f6f"/></svg>
<div class="a" style="left:122px;top:639px;width:18px;height:15px;background:#fff;border:1px solid #a8a8a8;"></div>
<div class="a" style="left:902px;top:639px;width:16px;height:15px;background:#fff;border:1px solid #a8a8a8;"></div>
<svg class="a" style="left:0;top:0" width="942" height="687"><path d="M908.5 642.5v8l4-4z" fill="#6f6f6f"/></svg>
<div class="a" style="left:919px;top:638px;width:17px;height:17px;background:#c6c6c6;"></div>
<div class="a k" style="left:70.80px;top:489px;font-size:11.5px;line-height:12px;color:#1e1e1e;letter-spacing:0.100px;">Field:</div>
<div class="a k" style="left:69.30px;top:504px;font-size:11.5px;line-height:12px;color:#1e1e1e;letter-spacing:-0.120px;">Table:</div>
<div class="a k" style="left:71.00px;top:519px;font-size:11.5px;line-height:12px;color:#1e1e1e;letter-spacing:0.180px;">Total:</div>
<div class="a k" style="left:75.00px;top:534px;font-size:11.5px;line-height:12px;color:#1e1e1e;letter-spacing:0.025px;">Sort:</div>
<div class="a k" style="left:66.90px;top:549px;font-size:11.5px;line-height:12px;color:#1e1e1e;letter-spacing:0.125px;">Show:</div>
<div class="a k" style="left:59.00px;top:564px;font-size:11.5px;line-height:12px;color:#1e1e1e;letter-spacing:0.013px;">Criteria:</div>
<div class="a k" style="left:85.20px;top:579px;font-size:11.5px;line-height:12px;color:#1e1e1e;letter-spacing:0.400px;">or:</div>
<div class="a k" style="left:108.90px;top:490px;font-size:11.5px;line-height:12px;color:#1e1e1e;letter-spacing:-0.112px;">Ship City</div>
<div class="a k" style="left:108.90px;top:505px;font-size:11.5px;line-height:12px;color:#1e1e1e;letter-spacing:-0.040px;">Orders</div>
<div class="a k" style="left:108.80px;top:520px;font-size:11.5px;line-height:12px;color:#1e1e1e;letter-spacing:-0.014px;">Group By</div>
<div class="a k" style="left:224.00px;top:490px;font-size:11.5px;line-height:12px;color:#1e1e1e;letter-spacing:-0.053px;">Month: Format([Order Date],"mmm")</div>
<div class="a k" style="left:224.30px;top:520px;font-size:11.5px;line-height:12px;color:#1e1e1e;letter-spacing:-0.014px;">Group By</div>
<div class="a k" style="left:419.80px;top:490px;font-size:11.5px;line-height:12px;color:#1e1e1e;letter-spacing:-0.129px;">Sales: Sum([Unit Price]*[Quantity]*(1-[Discount]))</div>
<div class="a k" style="left:419.40px;top:520px;font-size:11.5px;line-height:12px;color:#1e1e1e;letter-spacing:-0.122px;">Expression</div>
<div class="a" style="left:203px;top:489px;width:17px;height:14px;background:#dcdcdc;border:1px solid #b5b5b5;"></div>
<svg class="a" style="left:206px;top:495px;" width="11" height="7" viewBox="0 0 11 7"><path d="M1.8 1.5l3.7 3.7 3.7-3.7" fill="none" stroke="#555" stroke-width="1.1"/></svg>
<svg class="a" style="left:157px;top:550px;" width="13" height="13" viewBox="0 0 13 13"><rect x="0.5" y="0.5" width="12" height="12" fill="#fff" stroke="#333" stroke-width="1"/><path d="M2.5 6.5l2.8 3L10.5 3" fill="none" stroke="#333" stroke-width="1.1"/></svg>
<svg class="a" style="left:313px;top:550px;" width="13" height="13" viewBox="0 0 13 13"><rect x="0.5" y="0.5" width="12" height="12" fill="#fff" stroke="#333" stroke-width="1"/><path d="M2.5 6.5l2.8 3L10.5 3" fill="none" stroke="#333" stroke-width="1.1"/></svg>
<svg class="a" style="left:537px;top:550px;" width="13" height="13" viewBox="0 0 13 13"><rect x="0.5" y="0.5" width="12" height="12" fill="#fff" stroke="#333" stroke-width="1"/><path d="M2.5 6.5l2.8 3L10.5 3" fill="none" stroke="#333" stroke-width="1.1"/></svg>
<svg class="a" style="left:720px;top:550px;" width="13" height="13" viewBox="0 0 13 13"><rect x="0.5" y="0.5" width="12" height="12" fill="#fff" stroke="#333" stroke-width="1"/></svg>
<svg class="a" style="left:835px;top:550px;" width="13" height="13" viewBox="0 0 13 13"><rect x="0.5" y="0.5" width="12" height="12" fill="#fff" stroke="#333" stroke-width="1"/></svg>
<div class="a" style="left:40px;top:473px;width:643px;height:140px;background:transparent;border-style:solid;border-color:#ff9a00;border-width:7px 10px 7px 10px;border-radius:5px;"></div>
<div class="a" style="left:0px;top:664px;width:942px;height:1px;background:#c6c6c6;"></div>
<div class="a" style="left:0px;top:665px;width:942px;height:19px;background:#f0f0f0;"></div>
<div class="a" style="left:0px;top:684px;width:942px;height:3px;background:#101010;"></div>
<div class="a" style="left:48px;top:684px;width:320px;height:3px;background:#2b2b2b;"></div>
<div class="a" style="left:937px;top:684px;width:1px;height:3px;background:#9a9a9a;"></div>
<div class="a" style="left:7.10px;top:669px;font-size:11.5px;line-height:12px;color:#444;letter-spacing:-0.575px;">Ready</div>
<svg class="a" style="left:839px;top:668px;" width="14" height="13" viewBox="0 0 14 13"><rect x="0.5" y="0.5" width="13" height="12" fill="none" stroke="#666"/><path d="M0.5 3.5h13M4.5 0.5v12M6.5 6.5h5M6.5 9.5h5" stroke="#666" fill="none"/></svg>
<div class="a" style="left:876.50px;top:669px;font-size:10px;line-height:10px;color:#555;letter-spacing:-2.550px;">SQL</div>
<div class="a" style="left:903px;top:665px;width:37px;height:19px;background:#c6c6c6;"></div>
<svg class="a" style="left:915px;top:668px;" width="15" height="14" viewBox="0 0 15 14"><path d="M1.5 1v8h7" fill="none" stroke="#555"/><path d="M1.5 3l5 6" stroke="#555"/><path d="M6 8l6-6 1.5 1.5-6 6-2 .5z" fill="#555"/><rect x="1.5" y="10.5" width="12" height="2.5" fill="none" stroke="#555"/><path d="M4 11v1M7 11v1M10 11v1" stroke="#555"/></svg>
</body></html>
